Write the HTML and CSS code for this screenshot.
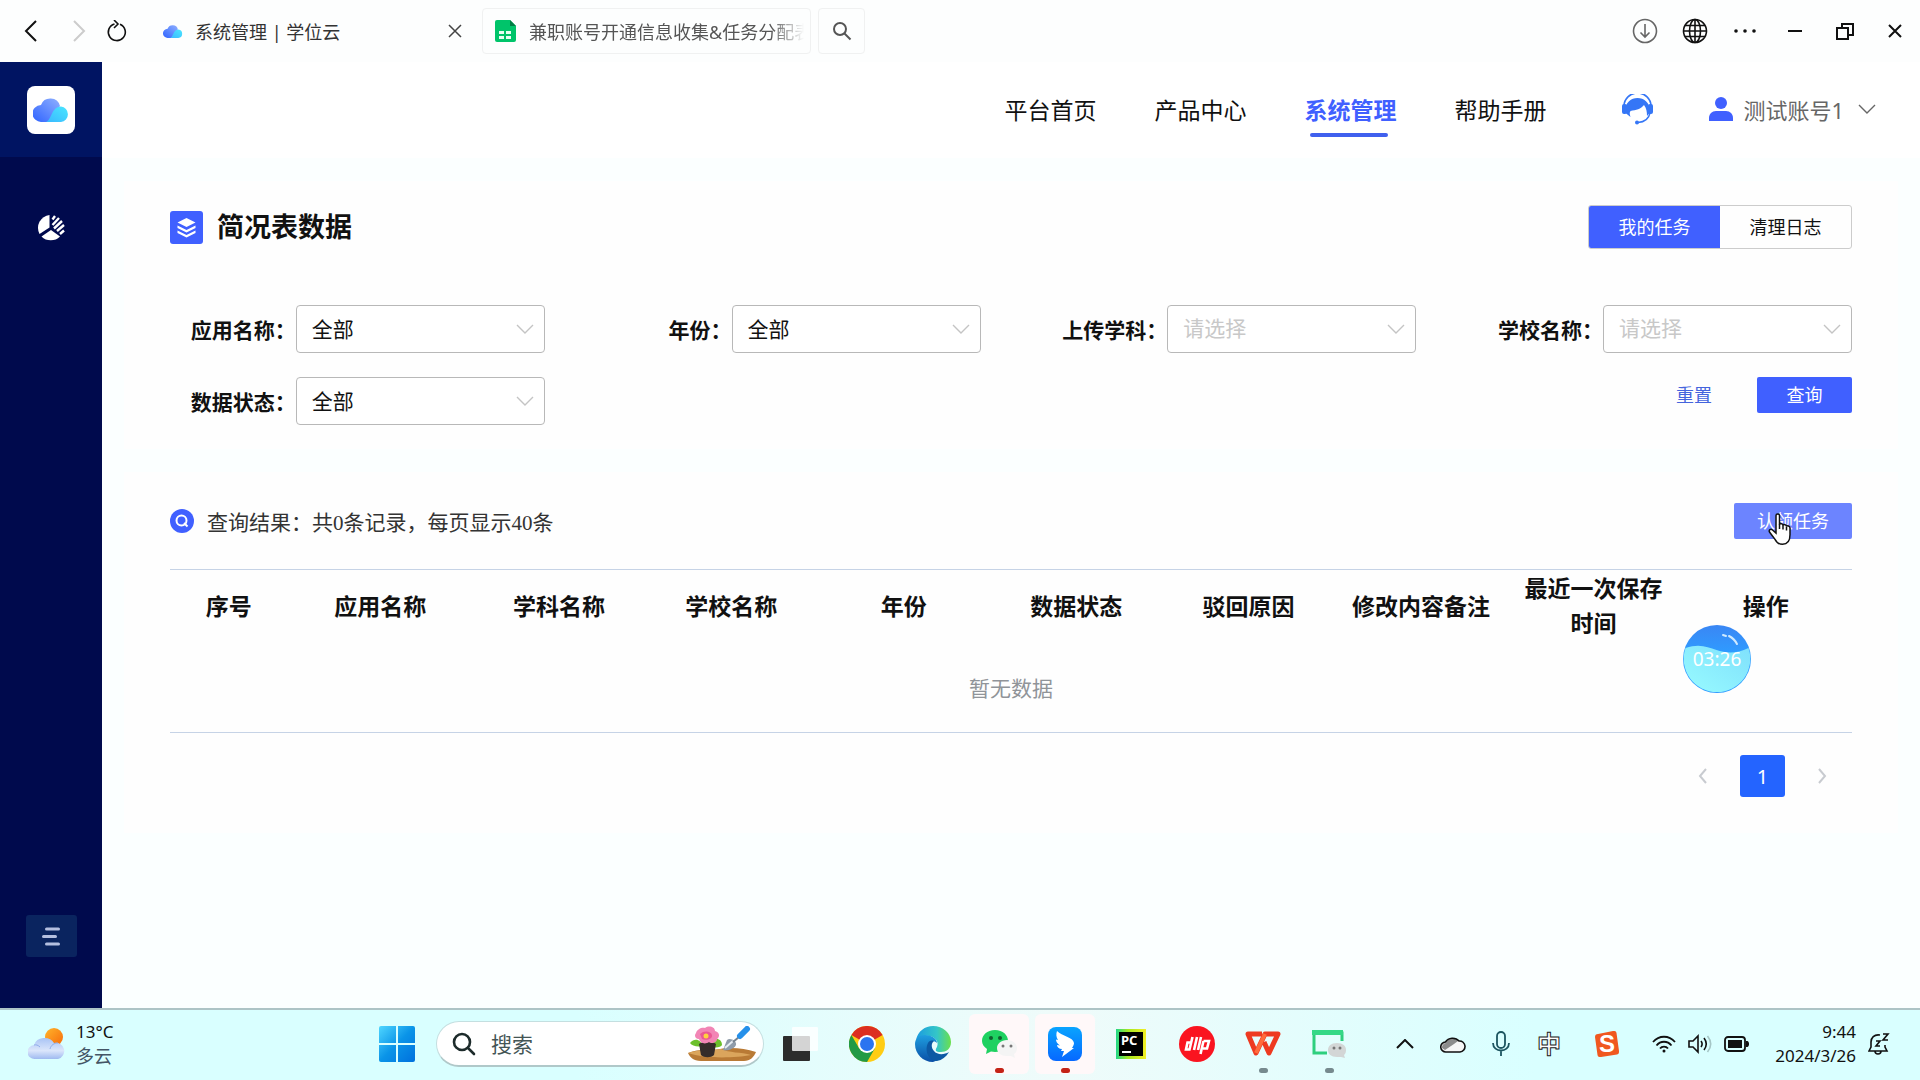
FILE: index.html
```
<!DOCTYPE html>
<html lang="zh-CN">
<head>
  <meta charset="UTF-8">
  <meta name="viewport" content="width=device-width, initial-scale=1.0">
  <title>系统管理 | 学位云</title>
  <link rel="stylesheet" href="styles.css">
</head>
<body>
  <!-- Shared gradients and symbols -->
  <svg class="defs" width="0" height="0" aria-hidden="true">
    <defs>
      <linearGradient id="cloudA" x1="0" y1="1" x2="1" y2="0">
        <stop offset="0" stop-color="#2f63ff"/><stop offset="1" stop-color="#8fb0ff"/>
      </linearGradient>
      <linearGradient id="cloudB" x1="0" y1="1" x2="1" y2="0">
        <stop offset="0" stop-color="#39b8ff"/><stop offset="1" stop-color="#4be6ff"/>
      </linearGradient>
      <symbol id="cloud" viewBox="0 0 36 24">
        <path d="M9 24a9 8.500 0 0 1-1-17 10 10 0 0 1 19 1L15 24z" fill="url(#cloudA)"/>
        <path d="M13 24c6-2 5-15 15-15.500a7.800 7.800 0 0 1 0 15.500z" fill="url(#cloudB)"/>
      </symbol>
    </defs>
  </svg>

  <!-- Browser bar -->
  <header class="browser">
    <div class="browser-nav">
      <button class="icon-btn back" aria-label="后退"><svg width="14" height="22" viewBox="0 0 14 22"><path d="M12 1 2 11l10 10" fill="none" stroke="#111" stroke-width="2"/></svg></button>
      <button class="icon-btn" aria-label="前进"><svg width="14" height="22" viewBox="0 0 14 22"><path d="m2 1 10 10L2 21" fill="none" stroke="#ccc" stroke-width="2"/></svg></button>
      <button class="icon-btn" aria-label="刷新"><svg width="22" height="22" viewBox="0 0 22 22"><path d="M14 4.200a8.500 8.500 0 1 1-5.500-.300" fill="none" stroke="#111" stroke-width="1.600"/><path d="M8 0l4 4-4 4" fill="none" stroke="#111" stroke-width="1.600"/></svg></button>
    </div>
    <div class="tab tab-active">
      <svg width="20" height="13"><use href="#cloud"/></svg>
      <span class="tab-title">系统管理 | 学位云</span>
      <button class="icon-btn" aria-label="关闭标签"><svg width="14" height="14" viewBox="0 0 14 14"><path d="M1 1l12 12M13 1 1 13" stroke="#444" stroke-width="1.500"/></svg></button>
    </div>
    <div class="tab tab-other">
      <svg width="22" height="24" viewBox="0 0 22 24"><path d="M2 1h13l6 6v14a2 2 0 0 1-2 2H2a2 2 0 0 1-2-2V3a2 2 0 0 1 2-2z" fill="#00c46a"/><path d="M15 1v6h6z" fill="#007e45"/><path d="M4 12h5v3H4zM11 12h5v3h-5zM4 17h5v3H4zM11 17h5v3h-5z" fill="#e6fff2"/></svg>
      <span class="tab-title">兼职账号开通信息收集&amp;任务分配表</span>
    </div>
    <button class="search-btn" aria-label="搜索"><svg width="20" height="20" viewBox="0 0 20 20"><circle cx="8" cy="8" r="6" fill="none" stroke="#555" stroke-width="2"/><path d="m12.500 12.500 6 6" stroke="#555" stroke-width="2"/></svg></button>
    <div class="window-tools">
      <button class="icon-btn" aria-label="下载"><svg width="26" height="26" viewBox="0 0 26 26" fill="none" stroke="#666" stroke-width="1.600"><circle cx="13" cy="13" r="11.500"/><path d="M13 6v13M8.500 14.500 13 19l4.500-4.500"/></svg></button>
      <button class="icon-btn" aria-label="语言"><svg width="26" height="26" viewBox="0 0 26 26" fill="none" stroke="#111" stroke-width="1.600"><circle cx="13" cy="13" r="11.500"/><ellipse cx="13" cy="13" rx="5.500" ry="11.500"/><path d="M1.500 13h23M3 7.500h20M3 18.500h20M13 1.500v23"/></svg></button>
      <button class="icon-btn" aria-label="更多"><svg width="26" height="26" viewBox="0 0 26 26" fill="#111"><circle cx="4" cy="13" r="1.800"/><circle cx="13" cy="13" r="1.800"/><circle cx="22" cy="13" r="1.800"/></svg></button>
      <button class="icon-btn" aria-label="最小化"><svg width="26" height="26" viewBox="0 0 26 26"><path d="M6 13h14" stroke="#111" stroke-width="2"/></svg></button>
      <button class="icon-btn" aria-label="还原"><svg width="26" height="26" viewBox="0 0 26 26" fill="none" stroke="#111" stroke-width="2"><path d="M5 10h11v11H5zM10 10V6h11v11h-5"/></svg></button>
      <button class="icon-btn" aria-label="关闭"><svg width="26" height="26" viewBox="0 0 26 26"><path d="m7 7 12 12M19 7 7 19" stroke="#111" stroke-width="2"/></svg></button>
    </div>
  </header>

  <div class="app">
    <!-- Sidebar -->
    <aside class="sidebar">
      <a class="logo" href="#" aria-label="学位云"><span class="logo-tile"><svg width="36" height="24"><use href="#cloud"/></svg></span></a>
      <a class="side-link" href="#" aria-label="数据">
        <svg width="28" height="28" viewBox="0 0 28 28">
          <path d="M12.500 1v12.500L2.500 20A13 13 0 0 1 12.500 1z" fill="#fff"/>
          <path d="M14 16l9 6.500a13 13 0 0 1-18.500 0z" fill="#fff"/>
          <path d="M15.500 5.500 18 2M15.500 11l6.500-7M17 14.500l8-7.500M20 17l7-6M23 20l4-3.500" stroke="#fff" stroke-width="2.400"/>
        </svg>
      </a>
      <button class="collapse" aria-label="展开菜单"><svg width="18" height="19" viewBox="0 0 18 19"><path d="M4.500 2h12M1.500 9.500h12M4.500 17h12" stroke="#b4bfe0" stroke-width="3" stroke-linecap="round"/></svg></button>
    </aside>

    <div class="page">
      <!-- Top navigation -->
      <nav class="topnav">
        <a href="#">平台首页</a>
        <a href="#">产品中心</a>
        <a href="#" class="active">系统管理</a>
        <a href="#">帮助手册</a>
        <a href="#" class="service" aria-label="客服">
          <svg width="31" height="31" viewBox="0 0 31 31">
            <path d="M2 12a13.500 13 0 0 1 27 0" fill="none" stroke="#3576f6" stroke-width="1.600"/>
            <path d="M3.500 19v-4a12 11 0 0 1 24 0v4l-2.500 3c0-4-.5-8-3-11-3 4-8 5-13.500 6-1.500 2-.5 4 0 6z" fill="#3576f6"/>
            <rect x="0" y="10" width="5" height="10" rx="2" fill="#3576f6"/>
            <rect x="26" y="10" width="5" height="10" rx="2" fill="#3576f6"/>
            <path d="M28 19c-1 5-5 9-12 9.500" fill="none" stroke="#3576f6" stroke-width="1.400"/>
            <circle cx="15" cy="28.500" r="2" fill="#3576f6"/>
          </svg>
        </a>
        <button class="account">
          <svg width="24" height="24" viewBox="0 0 24 24" fill="#4060ff"><circle cx="12" cy="6" r="6"/><path d="M0 24v-3c0-4 3-7 7-7h10c4 0 7 3 7 7v3z"/></svg>
          <span>测试账号1</span>
          <svg width="18" height="10" viewBox="0 0 18 10"><path d="m1 1 8 8 8-8" fill="none" stroke="#666" stroke-width="1.400"/></svg>
        </button>
      </nav>

      <main class="content">
        <!-- Filter card -->
        <section class="card">
          <div class="card-head">
            <h1 class="title">
              <svg width="33" height="33" viewBox="0 0 33 33"><rect width="33" height="33" rx="3" fill="#4060ff"/><path d="M16.500 7l9 4.500-9 4.500-9-4.500z" fill="#fff"/><path d="m7.500 14.500 9 4.500 9-4.500v2.500l-9 4.500-9-4.500zM7.500 19.500l9 4.500 9-4.500v2.500l-9 4.500-9-4.500z" fill="#fff"/></svg>
              简况表数据
            </h1>
            <div class="switch">
              <button class="switch-on">我的任务</button>
              <button>清理日志</button>
            </div>
          </div>
          <form class="filters">
            <div class="field"><label for="app-name">应用名称：</label><select id="app-name"><option>全部</option></select></div>
            <div class="field"><label for="year">年份：</label><select id="year"><option>全部</option></select></div>
            <div class="field"><label for="subject">上传学科：</label><select id="subject" class="empty"><option>请选择</option></select></div>
            <div class="field"><label for="school">学校名称：</label><select id="school" class="empty"><option>请选择</option></select></div>
            <div class="field"><label for="status">数据状态：</label><select id="status"><option>全部</option></select></div>
            <div class="actions">
              <button type="reset" class="link-btn">重置</button>
              <button type="button" class="btn">查询</button>
            </div>
          </form>
        </section>

        <!-- Result card -->
        <section class="card results">
          <div class="result-head">
            <svg width="24" height="24" viewBox="0 0 24 24"><circle cx="12" cy="12" r="12" fill="#4060ff"/><circle cx="11.500" cy="11.500" r="5" fill="none" stroke="#fff" stroke-width="2"/><path d="m14 14 3.500 3.500" stroke="#fff" stroke-width="2"/></svg>
            <p class="summary">查询结果：共0条记录，每页显示40条</p>
            <button class="btn claim">认领任务
              <svg class="pointer" width="26" height="33" viewBox="0 0 26 33"><path d="M9 2.500c0-2 3.500-2 3.500 0v9c.5-1.500 3.500-1 3.500.8.500-1.200 3.500-.8 3.500 1 .5-1 3.500-.5 3.500 1.500v7c0 5-2 9.500-7.500 9.500-4 0-6-2-7.500-5L2.500 19c-1-2 1.200-3.500 3-2L9 20z" fill="#fff" stroke="#111" stroke-width="1.500"/><path d="M12.500 11v5M16 12v4.500M19.500 13.500v4" stroke="#111" stroke-width="1.500"/></svg>
            </button>
          </div>
          <table>
            <thead>
              <tr>
                <th class="col-no">序号</th>
                <th class="col-app">应用名称</th>
                <th>学科名称</th>
                <th>学校名称</th>
                <th>年份</th>
                <th>数据状态</th>
                <th>驳回原因</th>
                <th>修改内容备注</th>
                <th>最近一次保存时间</th>
                <th>操作</th>
              </tr>
            </thead>
            <tbody>
              <tr><td colspan="10">暂无数据</td></tr>
            </tbody>
          </table>
          <div class="pager">
            <button class="icon-btn" aria-label="上一页"><svg width="10" height="16" viewBox="0 0 10 16"><path d="M8 1 2 8l6 7" fill="none" stroke="#c8cbd0" stroke-width="2"/></svg></button>
            <button class="page-no">1</button>
            <button class="icon-btn" aria-label="下一页"><svg width="10" height="16" viewBox="0 0 10 16"><path d="m2 1 6 7-6 7" fill="none" stroke="#c8cbd0" stroke-width="2"/></svg></button>
          </div>
          <!-- Floating timer -->
          <div class="timer">
            <svg width="68" height="68" viewBox="0 0 68 68">
              <defs>
                <linearGradient id="timerTop" x1="0" y1="0" x2="0" y2="1"><stop offset="0" stop-color="#3a86f4"/><stop offset=".4" stop-color="#2f9bff"/></linearGradient>
                <linearGradient id="timerWater" x1="0" y1="1" x2="1" y2="0"><stop offset="0" stop-color="#98fbff"/><stop offset="1" stop-color="#7fe0fc"/></linearGradient>
              </defs>
              <circle cx="34" cy="34" r="34" fill="url(#timerTop)"/>
              <path d="M2.500 23c14-5 22-1 31 2s20 4 32-2A33.300 33.300 0 1 1 2.500 23z" fill="url(#timerWater)"/>
              <path d="M40 10l3 1M46 11c4 2 6 4 8 8" fill="none" stroke="#cfeaff" stroke-width="2" stroke-linecap="round"/>
            </svg>
            <span>03:26</span>
          </div>
        </section>
      </main>
    </div>
  </div>

  <!-- Windows taskbar -->
  <footer class="taskbar">
    <div class="weather">
      <svg width="38" height="32" viewBox="0 0 38 32">
        <defs>
          <linearGradient id="sun" x1="0" y1="0" x2="1" y2="1"><stop offset="0" stop-color="#ffb52b"/><stop offset="1" stop-color="#f76a0b"/></linearGradient>
          <linearGradient id="wc" x1="0" y1="0" x2="0" y2="1"><stop offset="0" stop-color="#a9c4f5"/><stop offset=".6" stop-color="#dbe6fb"/><stop offset="1" stop-color="#9fbaf0"/></linearGradient>
        </defs>
        <circle cx="26" cy="9" r="9" fill="url(#sun)"/>
        <path d="M7 31a7 7 0 0 1-1-14 11 10 0 0 1 20-2 8 8 0 0 1 4 16z" fill="url(#wc)"/>
        <path d="M12 19c-2-2-4-2.500-6-2M22 21c1-4 4-6 8-6" stroke="#8fadea" fill="none"/>
      </svg>
      <div class="weather-text"><span>13°C</span><span class="muted">多云</span></div>
    </div>

    <div class="apps">
      <button class="icon-btn start" aria-label="开始">
        <svg width="36" height="36" viewBox="0 0 36 36">
          <defs><linearGradient id="win" x1="0" y1="0" x2="1" y2="1"><stop offset="0" stop-color="#4fd6ff"/><stop offset=".5" stop-color="#0a94e8"/><stop offset="1" stop-color="#0070dd"/></linearGradient></defs>
          <path d="M2 0h15v17H0V2a2 2 0 0 1 2-2zM19 0h15a2 2 0 0 1 2 2v15H19zM0 19h17v17H2a2 2 0 0 1-2-2zM19 19h17v15a2 2 0 0 1-2 2H19z" fill="url(#win)"/>
        </svg>
      </button>
      <div class="search-box">
        <svg width="24" height="24" viewBox="0 0 24 24" fill="none" stroke="#1d2b2b" stroke-width="2.600"><circle cx="10" cy="10" r="8"/><path d="m16 16 6 6" stroke-linecap="round"/></svg>
        <input type="text" placeholder="搜索" aria-label="搜索">
        <svg width="70" height="36" viewBox="0 0 70 36">
          <path d="M1 27c12-5 22-2 32-4s24-1 36 3c-2 5-6 9-12 9H14C6 35 3 31 1 27z" fill="#b97a35"/>
          <path d="M1 27c12-4 22-2 33-4 8 4 20 3 30 6-16 3-46 4-63-2z" fill="#dba55c"/>
          <path d="M3 17c5-6 11-3 13 3-6 1-11 0-13-3zM35 19c0-5-4-7-8-6l-2 8c5 1 9 0 10-2z" fill="#6cc02c"/>
          <path d="M12 18c3-3 14-3 17 0l-2 11c-3 3-10 3-13 0z" fill="#352c2a"/>
          <path d="M9 7c1-4 6-6 9-5 4-3 10-1 10 3 5 1 5 6 2 8 0 4-6 5-8 3-4 3-9 1-10-3-4 0-5-4-3-6z" fill="#f285b5"/>
          <path d="M13 8c4-4 11-3 12 1s-6 6-10 4z" fill="#ea5894"/><circle cx="19" cy="10" r="2.500" fill="#ffd23e"/>
          <path d="m36 24 4-10c3-3 10 1 9 5-2 4-8 6-13 5z" fill="#8f9caa"/><path d="m38 22 8-7" stroke="#e6edf3" stroke-width="2"/>
          <path d="m46 16 6-5" stroke="#77838f" stroke-width="2"/><path d="m53 10 7-7" stroke="#2590ea" stroke-width="6" stroke-linecap="round"/>
        </svg>
      </div>
      <button class="app-btn" aria-label="任务视图">
        <svg width="36" height="36" viewBox="0 0 36 36"><rect x="0" y="10" width="27" height="25" rx="1" fill="#2c2c2c"/><rect x="9" y="1" width="26" height="24" rx="1" fill="#fff" fill-opacity=".8"/></svg>
      </button>
      <button class="app-btn" aria-label="Chrome">
        <svg width="36" height="36" viewBox="0 0 36 36">
          <circle cx="18" cy="18" r="18" fill="#ffcd14"/>
          <path d="M18 18 2.400 9A18 18 0 0 1 33.600 9z" fill="#dc2e20"/>
          <path d="M2.400 9A18 18 0 0 0 18 36l7.800-13.500L10.200 22.500z" fill="#229a45"/>
          <circle cx="18" cy="18" r="9" fill="#fff"/><circle cx="18" cy="18" r="7" fill="#2a74f0"/>
        </svg>
      </button>
      <button class="app-btn" aria-label="Edge">
        <svg width="36" height="36" viewBox="0 0 36 36">
          <defs>
            <linearGradient id="edgeA" x1="0" y1="0" x2="1" y2="0"><stop offset="0" stop-color="#1b9be0"/><stop offset=".6" stop-color="#34c6c8"/><stop offset="1" stop-color="#6be04c"/></linearGradient>
            <linearGradient id="edgeB" x1="0" y1="0" x2="0" y2="1"><stop offset="0" stop-color="#1f9fe0"/><stop offset="1" stop-color="#0a4fa6"/></linearGradient>
          </defs>
          <path d="M1 14C3 5 10 0 18 0c10 0 18 7 18 16 0 7-5 10-10 10-6 0-6-2-4-5 3-7-5-12-12-11-4 1-7 2-9 4z" fill="url(#edgeA)"/>
          <path d="M0 18c0-6 5-9 10-9 7 0 12 4 12 8-4-4-9-1-9 5 0 7 6 11 14 8a18 18 0 0 1-9 6C8 36 0 28 0 18z" fill="url(#edgeB)"/>
          <path d="M13 17c-4 8 1 18 9 18 5-1 9-4 12-9-5 3-12 3-15-1-3-3-3-8 0-10-3-1-5 0-6 2z" fill="#0c59a4"/>
        </svg>
      </button>
      <button class="app-btn open alert" aria-label="微信">
        <svg width="36" height="36" viewBox="0 0 36 36">
          <path d="M14 4c8 0 13 5 13 11s-5 11-13 11l-4-.5L5 28l1-5c-3-2-5-5-5-8C1 9 6 4 14 4z" fill="#1fd161"/>
          <circle cx="10" cy="12" r="2" fill="#10602f"/><circle cx="19" cy="12" r="2" fill="#10602f"/>
          <path d="M26 14c6 0 10 4 10 8 0 3-1 5-3 6l1 4-4-2h-4c-6 0-10-3-10-8 0-4 4-8 10-8z" fill="#f4f4f4"/>
          <circle cx="22" cy="20" r="1.500" fill="#777"/><circle cx="30" cy="20" r="1.500" fill="#777"/>
        </svg>
      </button>
      <button class="app-btn open alert" aria-label="钉钉">
        <svg width="34" height="34" viewBox="0 0 34 34"><defs><linearGradient id="ding" x1="0" y1="0" x2="0" y2="1"><stop offset="0" stop-color="#09a4ff"/><stop offset="1" stop-color="#0668ff"/></linearGradient></defs><rect width="34" height="34" rx="8" fill="url(#ding)"/><path d="M9 4c5 5 16 6 17 12 0 2-1 3-2 5h2L14 30l2-6h-3l1-2c-3 0-5-2-5-4l3 .5c-3-2-4-4-4-6l2 .5C8 10 8 7 9 4z" fill="#fff"/></svg>
      </button>
      <button class="app-btn" aria-label="PyCharm">
        <svg width="32" height="32" viewBox="0 0 32 32"><defs><linearGradient id="pc" x1="0" y1="0" x2="1" y2="0"><stop offset="0" stop-color="#21d789"/><stop offset=".4" stop-color="#a4e821"/><stop offset="1" stop-color="#f3ee25"/></linearGradient></defs><rect x="1" y="1" width="30" height="30" fill="url(#pc)"/><rect x="4" y="4" width="24" height="24" fill="#000"/><text x="6" y="17" class="pc-text">PC</text><path d="M7 24h9" stroke="#fff" stroke-width="2"/></svg>
      </button>
      <button class="app-btn" aria-label="录屏">
        <svg width="36" height="36" viewBox="0 0 36 36"><circle cx="18" cy="18" r="18" fill="#fa1420"/><path d="m13.500 11-3 12.500H7l1.500-7H12M18 11l-3 13M22 11l-3 13M24.500 15l-3 13M24.500 15H30l-2 7.500h-4" fill="none" stroke="#fff" stroke-width="2.600"/></svg>
      </button>
      <button class="app-btn running" aria-label="WPS">
        <svg width="36" height="26" viewBox="0 0 36 26"><path d="M17 3H3l8 19 9-19h13l-9 19-5-11" fill="none" stroke="#ee3a20" stroke-width="5" stroke-linejoin="round"/><path d="m11 22 9-19" stroke="#ff6b3c" stroke-width="4"/></svg>
      </button>
      <button class="app-btn running" aria-label="企业微信">
        <svg width="34" height="32" viewBox="0 0 34 32"><path d="M15 25H2V5h28v8" fill="none" stroke="#2ecf7e" stroke-width="3"/><path d="M0 2h31v5H0z" fill="#35d886"/><path d="M25 15c6 0 9 3 9 7 0 3-1 4-2 5l1 3-4-1h-4c-6 0-9-3-9-7s3-7 9-7z" fill="#d3d6d6"/><circle cx="22" cy="20" r="1.500" fill="#777"/><circle cx="28" cy="20" r="1.500" fill="#777"/></svg>
      </button>
    </div>

    <div class="tray">
      <svg width="18" height="10" viewBox="0 0 18 10"><path d="m1 9 8-8 8 8" fill="none" stroke="#111" stroke-width="2"/></svg>
      <svg width="26" height="18" viewBox="0 0 26 18"><path d="M6 17a5 5 0 0 1-.5-10A8 7 0 0 1 19 6a5.500 5.500 0 0 1 1 11z" fill="#f6f6f6"/><path d="M2 13a5 5 0 0 1 4-5 7 7 0 0 1 12-2l-4 3-9 6z" fill="#8c8c8c"/><path d="M6 17a5 5 0 0 1-.5-10A8 7 0 0 1 19 6a5.500 5.500 0 0 1 1 11z" fill="none" stroke="#111" stroke-width="1.600"/></svg>
      <svg width="18" height="26" viewBox="0 0 18 26" fill="none" stroke="#1c5560" stroke-width="1.800"><rect x="5" y="1" width="8" height="16" rx="4"/><path d="M1 12c0 10 16 10 16 0M9 20v5"/></svg>
      <svg width="26" height="40" viewBox="0 0 26 40"><text x="1" y="29" class="ime-text">中</text></svg>
      <svg class="sogou" width="26" height="26" viewBox="0 0 26 26"><path d="m4 3 15-3c2 0 3 0 3.500 2L25 20c0 2 0 3-2 3.500L7 26c-2 0-3 0-3.500-2L1 6c0-2 1-3 3-3z" fill="#f0581f"/><text x="5" y="21" class="sogou-text">S</text></svg>
      <svg class="wifi" width="24" height="18" viewBox="0 0 24 18" fill="none" stroke="#111" stroke-width="1.800"><path d="M1 7c6-7 16-7 22 0M4.500 10.500c4-5 11-5 15 0M8 13.500c2-2.500 6-2.500 8 0"/><circle cx="12" cy="16" r="1.500" fill="#111" stroke="none"/></svg>
      <svg width="24" height="20" viewBox="0 0 24 20" fill="none" stroke="#111" stroke-width="1.600"><path d="M1 7h4l5-5v16l-5-5H1zM13 7c1.500 2 1.500 4 0 6M16 4c3 4 3 8 0 12"/><path d="M19.500 2c4 5 4 11 0 16" stroke="#a5c6c6"/></svg>
      <svg width="25" height="16" viewBox="0 0 25 16"><rect x="1" y="1" width="20" height="14" rx="3" fill="none" stroke="#111" stroke-width="1.800"/><rect x="4" y="4" width="14" height="8" fill="#111"/><path d="M22 5h1.500c2 1 2 5 0 6H22z" fill="#111"/></svg>
      <div class="clock"><span>9:44</span><span>2024/3/26</span></div>
      <svg width="22" height="24" viewBox="0 0 22 24" fill="none" stroke="#111" stroke-width="1.600"><path d="M12 3C6 2 3 6 3 10v5l-2 4h18l-2-4v-2M7 19c0 4 6 4 6 0M8 9h4l-4 5h4M15 2h5l-5 6h5"/></svg>
    </div>
  </footer>
</body>
</html>
```
FILE: styles.css
```
* {
  box-sizing: border-box;
  margin: 0;
  padding: 0;
}

body {
  font-family: "Noto Sans", "Noto Sans CJK SC", sans-serif;
  background: #fbffff;
  color: #111;
  display: flex;
  flex-direction: column;
  min-height: 100vh;
}

button, select, input {
  font-family: inherit;
}

button {
  border: none;
  background: none;
  cursor: pointer;
}

a {
  color: inherit;
  text-decoration: none;
}

svg {
  flex: none;
}

.defs {
  position: absolute;
}

.icon-btn {
  display: flex;
  align-items: center;
  justify-content: center;
}

/* Browser bar */
.browser {
  display: flex;
  align-items: center;
  height: 62px;
  padding: 0 12px 0 24px;
  background: #fdfefe;
}

.browser-nav {
  display: flex;
  align-items: center;
  gap: 20px;
  margin-right: 35px;
}

.browser-nav .back {
  margin-right: 14px;
}

.tab {
  display: flex;
  align-items: center;
  height: 46px;
  gap: 12px;
  font-size: 18px;
}

.tab-active {
  width: 299px;
  color: #333;
}

.tab-title {
  flex: 1;
  overflow: hidden;
  white-space: nowrap;
}

.tab-other {
  width: 329px;
  margin: 0 7px 0 20px;
  padding: 0 6px 0 12px;
  border: 1px solid #f0f1f1;
  border-radius: 4px;
  color: #555;
}

.tab-other .tab-title {
  mask-image: linear-gradient(to right, #000 88%, transparent);
}

.search-btn {
  display: flex;
  align-items: center;
  justify-content: center;
  width: 47px;
  height: 46px;
  border: 1px solid #f0f1f1;
  border-radius: 4px;
}

.window-tools {
  display: flex;
  gap: 24px;
  margin-left: auto;
}

/* App shell */
.app {
  display: flex;
  flex: 1;
}

.sidebar {
  display: flex;
  flex-direction: column;
  align-items: center;
  width: 102px;
  padding-bottom: 51px;
  background: #000a4d;
}

.logo {
  display: flex;
  align-items: center;
  justify-content: center;
  width: 100%;
  height: 95px;
  background: #001462;
}

.logo-tile {
  display: flex;
  align-items: center;
  justify-content: center;
  width: 48px;
  height: 48px;
  background: #fff;
  border-radius: 8px;
}

.side-link {
  margin-top: 57px;
}

.collapse {
  display: flex;
  align-items: center;
  justify-content: center;
  width: 51px;
  height: 42px;
  margin-top: auto;
  background: #0a245f;
  border-radius: 3px;
}

.page {
  flex: 1;
  min-width: 0;
}

.topnav {
  display: flex;
  align-items: center;
  justify-content: flex-end;
  height: 96px;
  padding: 0 44px 2px 0;
  background: #fff;
  font-size: 23px;
}

.topnav a {
  margin-right: 58px;
}

.topnav .active {
  position: relative;
  color: #4060ff;
  font-weight: bold;
}

.topnav .active::after {
  content: "";
  position: absolute;
  left: 6px;
  right: 8px;
  bottom: -11px;
  height: 4px;
  border-radius: 2px;
  background: #4060ee;
}

.topnav .service {
  display: flex;
  margin: 0 56px 0 18px;
}

.account {
  display: flex;
  align-items: center;
  gap: 10px;
  font-size: 22px;
  color: #666;
}

.account span {
  margin-right: 4px;
}

/* Cards */
.content {
  display: flex;
  flex-direction: column;
  gap: 23px;
  padding: 23px 22px;
}

.card {
  padding: 24px 46px;
  background: #fefefe;
}

.card-head,
.result-head {
  display: flex;
  align-items: center;
}

.title {
  display: flex;
  align-items: center;
  gap: 14px;
  font-size: 27px;
  line-height: 42px;
}

.switch {
  display: flex;
  margin-left: auto;
  border: 1px solid #ccc;
  border-radius: 3px;
  overflow: hidden;
}

.switch button {
  width: 131px;
  height: 42px;
  padding-bottom: 2px;
  font-size: 18px;
  color: #111;
}

.switch .switch-on {
  background: #4060ff;
  color: #fff;
}

.filters {
  display: grid;
  grid-template-columns: repeat(4, 1fr);
  gap: 24px 61px;
  margin-top: 56px;
}

.field {
  display: flex;
  align-items: center;
  justify-content: flex-end;
}

.field label {
  font-size: 21px;
  font-weight: bold;
  white-space: nowrap;
}

.field select {
  width: 249px;
  height: 48px;
  padding: 0 15px;
  border: 1px solid #b8b8b8;
  border-radius: 4px;
  appearance: none;
  background: #fff url("data:image/svg+xml,%3Csvg xmlns='http://www.w3.org/2000/svg' width='18' height='10'%3E%3Cpath d='M1 1l8 8 8-8' fill='none' stroke='%23c4c4c4' stroke-width='1.400'/%3E%3C/svg%3E") no-repeat right 10px center;
  font-size: 21px;
  color: #111;
}

.field select.empty {
  padding-bottom: 2px;
  color: #c8c8c8;
}

.actions {
  grid-column: 2 / -1;
  display: flex;
  justify-content: flex-end;
  align-items: flex-start;
  gap: 45px;
}

.btn,
.link-btn {
  height: 36px;
  padding-bottom: 2px;
  font-size: 18px;
}

.btn {
  min-width: 95px;
  background: #4060ff;
  border-radius: 2px;
  color: #fff;
}

.link-btn {
  color: #4464dd;
}

.results {
  position: relative;
  padding-top: 31px;
  padding-bottom: 36px;
}

.summary {
  margin-left: 13px;
  font-family: "Liberation Serif", "Noto Sans CJK SC", serif;
  font-size: 21px;
  color: #333;
}

.claim {
  position: relative;
  width: 118px;
  margin-left: auto;
  background: #6c84ff;
}

.pointer {
  position: absolute;
  left: 33px;
  top: 10px;
}

table {
  width: 100%;
  margin-top: 30px;
  border-collapse: collapse;
  table-layout: fixed;
  border-top: 1px solid #c6d3e6;
  border-bottom: 1px solid #c6d3e6;
}

th {
  height: 75px;
  padding: 0 16px 2px;
  font-size: 23px;
  line-height: 35px;
}

.col-no {
  width: 7%;
}

.col-app {
  width: 11%;
}

td {
  height: 88px;
  padding-bottom: 3px;
  text-align: center;
  font-size: 21px;
  color: #909499;
}

.pager {
  display: flex;
  align-items: center;
  justify-content: flex-end;
  gap: 32px;
  margin-top: 22px;
  padding-right: 25px;
}

.page-no {
  width: 45px;
  height: 42px;
  background: #2464ff;
  border-radius: 3px;
  color: #fff;
  font-size: 20px;
}

.timer {
  position: absolute;
  top: 153px;
  right: 147px;
  display: grid;
  place-items: center;
  color: #fff;
  font-size: 19px;
}

.timer > * {
  grid-area: 1 / 1;
}

/* Taskbar */
.taskbar {
  display: grid;
  grid-template-columns: 351px 1fr auto;
  align-items: center;
  height: 72px;
  padding: 0 30px 2px 28px;
  border-top: 2px solid #adc4c6;
  background: linear-gradient(to right, #d9ffff 30%, #effbfa 55%, #d9ffff 80%);
  font-size: 17px;
}

.weather {
  display: flex;
  align-items: center;
  gap: 10px;
}

.weather-text,
.clock {
  display: flex;
  flex-direction: column;
  line-height: 24px;
}

.weather-text .muted {
  font-size: 18px;
  color: #456;
}

.apps {
  display: flex;
  align-items: center;
}

.search-box {
  display: flex;
  align-items: center;
  width: 328px;
  height: 46px;
  margin: 0 4px 0 21px;
  padding: 0 6px 0 15px;
  border: 1px solid #c4dfe0;
  border-bottom: 2px solid #b0c8c9;
  border-radius: 23px;
  background: #fff;
}

.search-box input {
  flex: 1;
  min-width: 0;
  padding-left: 15px;
  border: none;
  outline: none;
  background: none;
  font-size: 21px;
}

.search-box input::placeholder {
  color: #455;
}

.app-btn {
  display: flex;
  align-items: center;
  justify-content: center;
  position: relative;
  width: 60px;
  height: 60px;
  margin: 0 3px;
  border-radius: 6px;
}

.app-btn.open {
  background: #fff8f9;
}

.app-btn.alert::after,
.app-btn.running::after {
  content: "";
  position: absolute;
  bottom: 1px;
  width: 9px;
  height: 5px;
  border-radius: 3px;
  background: #768a8e;
}

.app-btn.alert::after {
  background: #c42216;
}

.pc-text {
  font: bold 13px "Noto Sans", sans-serif;
  fill: #fff;
}

.ime-text {
  font: bold 24px "Noto Sans CJK SC", sans-serif;
  fill: #fff;
  stroke: #222;
  stroke-width: 1px;
}

.sogou-text {
  font: bold 24px "Liberation Sans", sans-serif;
  fill: #fff;
}

.tray {
  display: flex;
  align-items: center;
  gap: 26px;
}

.tray .sogou {
  margin: 0 6px;
}

.tray .wifi ~ * {
  margin-left: -14px;
}

.tray .wifi ~ .clock {
  margin-left: 0;
  text-align: right;
}
```
